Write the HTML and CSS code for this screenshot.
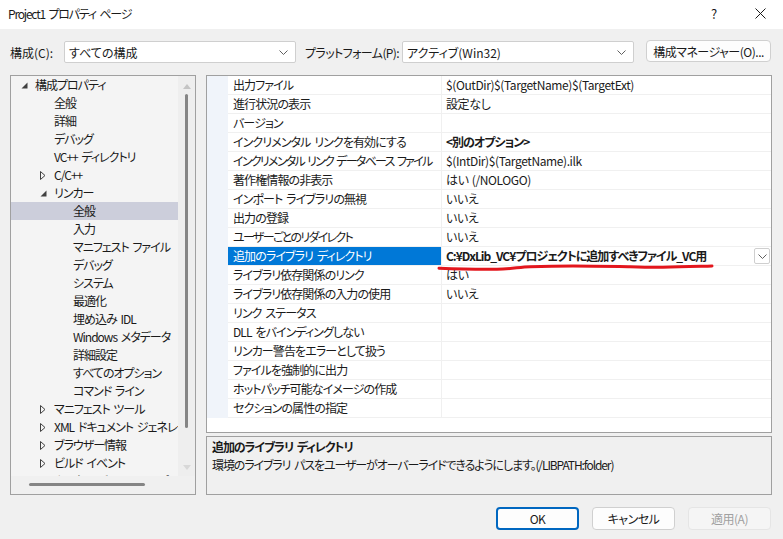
FILE: index.html
```html
<!DOCTYPE html>
<html lang="ja">
  <head>
    <meta charset="UTF-8">
    <title>Project1 プロパティ ページ</title>
    <link rel="stylesheet" href="styles.css">
  </head>
  <body>
    <div class="titlebar">
      <span class="title">Project1 プロパティ ページ</span>
      <span class="caption-btn">?</span>
      <span class="caption-btn">
        <svg width="11" height="11" viewBox="0 0 11 11">
          <path d="M0.5 0.5 L10.5 10.5 M10.5 0.5 L0.5 10.5" stroke="#1a1a1a" stroke-width="1" fill="none" />
        </svg>
      </span>
    </div>

    <div class="toolbar">
      <span class="label config-label">構成(C):</span>
      <div class="combo">
        <span>すべての構成</span>
        <svg class="chevron" width="9" height="5" viewBox="0 0 9 5"><path d="M0.5 0.5 L4.5 4.5 L8.5 0.5" stroke="#606060" fill="none" /></svg>
      </div>
      <span class="label platform-label">プラットフォーム(P):</span>
      <div class="combo">
        <span>アクティブ(Win32)</span>
        <svg class="chevron" width="9" height="5" viewBox="0 0 9 5"><path d="M0.5 0.5 L4.5 4.5 L8.5 0.5" stroke="#606060" fill="none" /></svg>
      </div>
      <button class="btn manager">構成マネージャー(O)...</button>
    </div>

    <div class="main">
      <div class="tree">
        <div class="tree-body">
          <ul class="tree-list">
            <li class="lv0"><span class="arrow"><svg width="7" height="7" viewBox="0 0 7 7"><path d="M6.5 0.5 V6.5 H0.5 Z" fill="#404040" /></svg></span>構成プロパティ</li>
            <li class="lv1"><span class="arrow"></span>全般</li>
            <li class="lv1"><span class="arrow"></span>詳細</li>
            <li class="lv1"><span class="arrow"></span>デバッグ</li>
            <li class="lv1"><span class="arrow"></span>VC++ ディレクトリ</li>
            <li class="lv1"><span class="arrow"><svg width="6" height="9" viewBox="0 0 6 9"><path d="M0.5 0.5 L5 4.5 L0.5 8.5 Z" fill="none" stroke="#404040" /></svg></span>C/C++</li>
            <li class="lv1"><span class="arrow"><svg width="7" height="7" viewBox="0 0 7 7"><path d="M6.5 0.5 V6.5 H0.5 Z" fill="#404040" /></svg></span>リンカー</li>
            <li class="lv2 selected"><span class="arrow"></span>全般</li>
            <li class="lv2"><span class="arrow"></span>入力</li>
            <li class="lv2"><span class="arrow"></span>マニフェスト ファイル</li>
            <li class="lv2"><span class="arrow"></span>デバッグ</li>
            <li class="lv2"><span class="arrow"></span>システム</li>
            <li class="lv2"><span class="arrow"></span>最適化</li>
            <li class="lv2"><span class="arrow"></span>埋め込み IDL</li>
            <li class="lv2"><span class="arrow"></span>Windows メタデータ</li>
            <li class="lv2"><span class="arrow"></span>詳細設定</li>
            <li class="lv2"><span class="arrow"></span>すべてのオプション</li>
            <li class="lv2"><span class="arrow"></span>コマンド ライン</li>
            <li class="lv1"><span class="arrow"><svg width="6" height="9" viewBox="0 0 6 9"><path d="M0.5 0.5 L5 4.5 L0.5 8.5 Z" fill="none" stroke="#404040" /></svg></span>マニフェスト ツール</li>
            <li class="lv1"><span class="arrow"><svg width="6" height="9" viewBox="0 0 6 9"><path d="M0.5 0.5 L5 4.5 L0.5 8.5 Z" fill="none" stroke="#404040" /></svg></span>XML ドキュメント ジェネレーター</li>
            <li class="lv1"><span class="arrow"><svg width="6" height="9" viewBox="0 0 6 9"><path d="M0.5 0.5 L5 4.5 L0.5 8.5 Z" fill="none" stroke="#404040" /></svg></span>ブラウザー情報</li>
            <li class="lv1"><span class="arrow"><svg width="6" height="9" viewBox="0 0 6 9"><path d="M0.5 0.5 L5 4.5 L0.5 8.5 Z" fill="none" stroke="#404040" /></svg></span>ビルド イベント</li>
            <li class="lv1"><span class="arrow"><svg width="6" height="9" viewBox="0 0 6 9"><path d="M0.5 0.5 L5 4.5 L0.5 8.5 Z" fill="none" stroke="#404040" /></svg></span>カスタム ビルド ステップ</li>
          </ul>
          <div class="vscroll">
            <span class="sb-up"></span>
            <span class="vthumb"></span>
            <span class="sb-down"></span>
          </div>
        </div>
        <div class="hscroll"><span class="hthumb"></span></div>
      </div>

      <div class="side">
        <div class="grid">
          <div class="row"><span class="gutter"></span><span class="name">出力ファイル</span><span class="value">$(OutDir)$(TargetName)$(TargetExt)</span></div>
          <div class="row"><span class="gutter"></span><span class="name">進行状況の表示</span><span class="value">設定なし</span></div>
          <div class="row"><span class="gutter"></span><span class="name">バージョン</span><span class="value"></span></div>
          <div class="row"><span class="gutter"></span><span class="name">インクリメンタル リンクを有効にする</span><span class="value bold">&lt;別のオプション&gt;</span></div>
          <div class="row"><span class="gutter"></span><span class="name narrow">インクリメンタル リンク データベース ファイル</span><span class="value">$(IntDir)$(TargetName).ilk</span></div>
          <div class="row"><span class="gutter"></span><span class="name">著作権情報の非表示</span><span class="value">はい (/NOLOGO)</span></div>
          <div class="row"><span class="gutter"></span><span class="name">インポート ライブラリの無視</span><span class="value">いいえ</span></div>
          <div class="row"><span class="gutter"></span><span class="name">出力の登録</span><span class="value">いいえ</span></div>
          <div class="row"><span class="gutter"></span><span class="name narrow">ユーザーごとのリダイレクト</span><span class="value">いいえ</span></div>
          <div class="row active">
            <span class="gutter"></span><span class="name">追加のライブラリ ディレクトリ</span>
            <span class="value bold">C:¥DxLib_VC¥プロジェクトに追加すべきファイル_VC用
              <span class="drop">
                <svg width="9" height="5" viewBox="0 0 9 5"><path d="M0.5 0.5 L4.5 4.5 L8.5 0.5" stroke="#606060" fill="none" /></svg>
              </span>
            </span>
          </div>
          <div class="row"><span class="gutter"></span><span class="name">ライブラリ依存関係のリンク</span><span class="value">はい</span></div>
          <div class="row"><span class="gutter"></span><span class="name">ライブラリ依存関係の入力の使用</span><span class="value">いいえ</span></div>
          <div class="row"><span class="gutter"></span><span class="name">リンク ステータス</span><span class="value"></span></div>
          <div class="row"><span class="gutter"></span><span class="name">DLL をバインディングしない</span><span class="value"></span></div>
          <div class="row"><span class="gutter"></span><span class="name">リンカー警告をエラーとして扱う</span><span class="value"></span></div>
          <div class="row"><span class="gutter"></span><span class="name">ファイルを強制的に出力</span><span class="value"></span></div>
          <div class="row"><span class="gutter"></span><span class="name">ホットパッチ可能なイメージの作成</span><span class="value"></span></div>
          <div class="row"><span class="gutter"></span><span class="name">セクションの属性の指定</span><span class="value"></span></div>
        </div>
        <div class="desc">
          <div class="desc-title">追加のライブラリ ディレクトリ</div>
          <div>環境のライブラリ パスをユーザーがオーバーライドできるようにします。(/LIBPATH:folder)</div>
        </div>
      </div>
    </div>

    <div class="footer">
      <button class="btn default">OK</button>
      <button class="btn">キャンセル</button>
      <button class="btn" disabled>適用(A)</button>
    </div>

    <!-- hand-drawn marker under the edited path -->
    <svg class="marker" width="284" height="12" viewBox="0 0 284 12">
      <path d="M3 6.3 C20 7 40 7.6 61 7.3 C75 7 84 5 94 4.7 C110 4.2 125 4 137 4 C160 4.1 180 4.5 194 4.7 C206 5 216 5.4 227 5.3 C245 5 262 4.4 276 4" stroke="#e3161d" stroke-width="3" stroke-linecap="round" fill="none" />
    </svg>
  </body>
</html>
```

FILE: styles.css
```css
html, body {
  margin: 0;
  padding: 0;
}
body {
  width: 783px;
  height: 539px;
  overflow: hidden;
  position: relative;
  background-color: #f0f0f0;
  color: #1a1a1a;
  font-family: "Noto Sans CJK JP", "Noto Sans", sans-serif;
  font-feature-settings: "palt";
  font-size: 12px;
}
ul {
  margin: 0;
  padding: 0;
  list-style: none;
}
button {
  font-family: inherit;
  font-feature-settings: "palt";
  font-size: 12px;
}

/* window caption */
.titlebar {
  height: 29px;
  background-color: #ffffff;
  display: flex;
  align-items: center;
  padding-left: 8px;
}
.title {
  flex: 1;
  margin-top: -3px;
  letter-spacing: -1.2px;
  word-spacing: 2px;
}
.caption-btn {
  width: 46px;
  height: 29px;
  display: flex;
  align-items: center;
  justify-content: center;
  font-size: 13px;
  margin-top: -3px;
}

/* configuration bar */
.toolbar {
  display: flex;
  align-items: center;
  margin-top: 12px;
  padding-left: 10px;
  height: 22px;
  white-space: nowrap;
}
.label {
  flex: none;
}
.config-label {
  width: 54px;
}
.platform-label {
  width: 97px;
  margin-left: 9px;
  letter-spacing: -0.6px;
}
.combo {
  width: 232px;
  height: 22px;
  box-sizing: border-box;
  border: 1px solid #cfcfcf;
  border-radius: 2px;
  background-color: #ffffff;
  display: flex;
  align-items: center;
  justify-content: space-between;
  padding: 0 7px 0 4px;
}
.btn {
  width: 83px;
  height: 23px;
  box-sizing: border-box;
  border: 1px solid #d0d0d0;
  border-radius: 4px;
  background-color: #fdfdfd;
  color: #1a1a1a;
  padding: 0;
  letter-spacing: -0.5px;
}
.manager {
  width: 125px;
  height: 22px;
  margin-left: 12px;
  margin-top: -2px;
}

/* main area */
.main {
  display: flex;
  margin-top: 12px;
  padding-left: 10px;
  height: 420px;
}
.tree {
  width: 186px;
  height: 420px;
  box-sizing: border-box;
  border: 1px solid #a0a0a0;
  display: flex;
  flex-direction: column;
}
.tree-body {
  display: flex;
  height: 400px;
}
.tree-list {
  flex: 1;
  background-color: #f4f4f4;
  overflow: hidden;
  white-space: nowrap;
  letter-spacing: -1px;
  word-spacing: 2px;
}
.tree-list li {
  height: 18px;
  line-height: 18px;
  display: flex;
  align-items: center;
}
.tree-list li.selected {
  background-color: #cccedb;
}
.lv0 {
  padding-left: 10px;
}
.lv1 {
  padding-left: 29px;
}
.lv2 {
  padding-left: 48px;
}
.arrow {
  width: 14px;
  height: 18px;
  flex: none;
  display: flex;
  align-items: center;
  padding-top: 1px;
  box-sizing: border-box;
}
.vscroll {
  width: 17px;
  background-color: #eeeeee;
  display: flex;
  flex-direction: column;
  align-items: center;
}
.sb-up {
  margin-top: 8px;
  border-style: solid;
  border-width: 0 4px 5px 4px;
  border-color: transparent transparent #c4c4c4 transparent;
}
.vthumb {
  width: 3px;
  height: 334px;
  margin-top: 5px;
  background-color: #858585;
  border-radius: 2px;
}
.sb-down {
  margin-top: 37px;
  border-style: solid;
  border-width: 5px 4px 0 4px;
  border-color: #d8d8d8 transparent transparent transparent;
}
.hscroll {
  flex: 1;
  background-color: #f0f0f0;
}
.hthumb {
  display: block;
  width: 116px;
  height: 3px;
  margin: 7px 0 0 18px;
  background-color: #858585;
  border-radius: 2px;
}

/* property grid */
.side {
  margin-left: 10px;
  width: 566px;
  display: flex;
  flex-direction: column;
}
.grid {
  height: 358px;
  box-sizing: border-box;
  border: 1px solid #a0a0a0;
  background-color: #ffffff;
}
.row {
  display: flex;
  height: 19px;
  line-height: 18px;
}
.gutter {
  width: 21px;
  flex: none;
  background-color: #f0f4fa;
}
.name {
  width: 214px;
  flex: none;
  box-sizing: border-box;
  padding-left: 5px;
  border-bottom: 1px solid #f0f0f0;
  border-right: 1px solid #f0f0f0;
  white-space: nowrap;
  overflow: hidden;
  letter-spacing: -0.9px;
  word-spacing: 2px;
}
.name.narrow {
  letter-spacing: -1.7px;
}
.value {
  flex: 1;
  padding-left: 4px;
  border-bottom: 1px solid #f0f0f0;
  white-space: nowrap;
  position: relative;
  letter-spacing: -0.4px;
  word-spacing: 1px;
}
.bold {
  font-weight: bold;
  letter-spacing: -1px;
}
.active .name {
  background-color: #0078d7;
  color: #ffffff;
}
.drop {
  position: absolute;
  right: 1px;
  top: 1px;
  width: 16px;
  height: 16px;
  box-sizing: border-box;
  border: 1px solid #cfcfcf;
  border-radius: 2px;
  background-color: #ffffff;
  display: flex;
  align-items: center;
  justify-content: center;
}

/* description pane */
.desc {
  margin-top: 3px;
  height: 59px;
  box-sizing: border-box;
  border: 1px solid #a0a0a0;
  padding: 1px 5px;
  line-height: 18px;
  letter-spacing: -1.1px;
  word-spacing: 2px;
  white-space: nowrap;
}
.desc-title {
  font-weight: bold;
}

/* dialog buttons */
.footer {
  display: flex;
  justify-content: flex-end;
  gap: 13px;
  margin-top: 12px;
  padding-right: 12px;
}
.btn.default {
  border: 2px solid #0067c0;
}
.btn:disabled {
  background-color: #f5f5f5;
  border-color: #e5e5e5;
  color: #a0a0a0;
}

.marker {
  position: absolute;
  left: 436px;
  top: 262px;
}
```
